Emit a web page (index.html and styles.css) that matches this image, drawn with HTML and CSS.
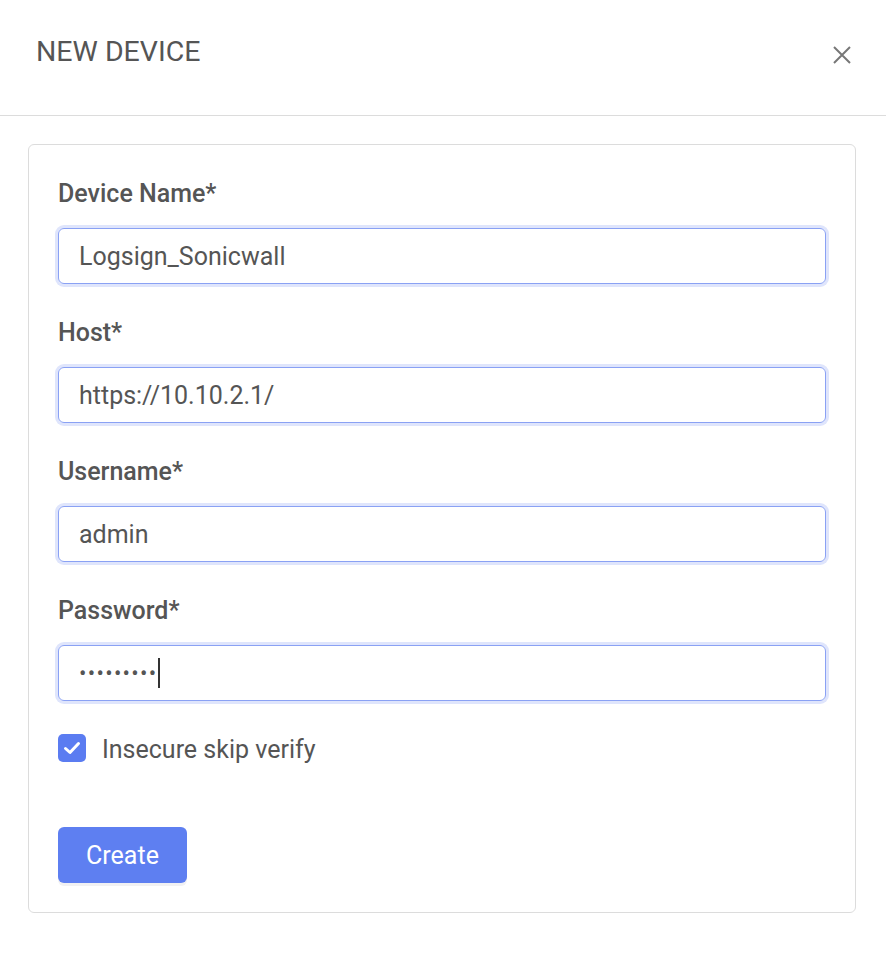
FILE: index.html
```html
<!DOCTYPE html>
<html lang="en">
<head>
<meta charset="utf-8">
<title>New Device</title>
<link rel="stylesheet" href="styles.css">
</head>
<body>
<div class="modal">
  <header class="modal-header">
    <h1 class="modal-title">NEW DEVICE</h1>
    <button class="close-btn" aria-label="Close">
      <svg width="18" height="18" viewBox="0 0 18 18"><path d="M1 1 L17 17 M17 1 L1 17" stroke="#777" stroke-width="2" fill="none"/></svg>
    </button>
  </header>
  <div class="card">
    <div class="field">
      <label class="label">Device Name*</label>
      <div class="input">Logsign_Sonicwall</div>
    </div>
    <div class="field">
      <label class="label">Host*</label>
      <div class="input">https://10.10.2.1/</div>
    </div>
    <div class="field">
      <label class="label">Username*</label>
      <div class="input">admin</div>
    </div>
    <div class="field">
      <label class="label">Password*</label>
      <div class="input"><span class="dots">•••••••••</span><span class="caret"></span></div>
    </div>
    <div class="check-row">
      <span class="checkbox">
        <svg width="28" height="28" viewBox="0 0 28 28"><path d="M7.5 14.5 L12 18.5 L20.5 9.5" stroke="#fff" stroke-width="3" fill="none" stroke-linecap="round" stroke-linejoin="round"/></svg>
      </span>
      <span class="check-label">Insecure skip verify</span>
    </div>
    <button class="create-btn">Create</button>
  </div>
</div>
</body>
</html>
```

FILE: styles.css
```css
* { box-sizing: border-box; }
html, body { margin: 0; padding: 0; background: #fff; }
body { font-family: Roboto, "Liberation Sans", Arial, sans-serif; color: #555; }

.modal { width: 886px; }

.modal-header {
  height: 116px;
  border-bottom: 1px solid #dcdcdc;
  display: flex;
  justify-content: space-between;
  align-items: flex-start;
  padding: 36px 35px 0 36px;
}
.modal-title {
  margin: 0;
  font-size: 28.5px;
  line-height: 32px;
  font-weight: 400;
  color: #555;
}
.close-btn {
  border: none;
  background: none;
  padding: 0;
  margin-top: 10px;
  width: 18px;
  height: 18px;
  display: block;
  cursor: pointer;
}
.close-btn svg { display: block; }

.card {
  margin: 28px 30px 0 28px;
  border: 1px solid #dcdcdc;
  border-radius: 6px;
  padding: 35px 29px 29px 29px;
  display: flex;
  flex-direction: column;
  align-items: flex-start;
}

.field {
  width: 100%;
  display: flex;
  flex-direction: column;
  margin-bottom: 35px;
}
.field:nth-child(4) { margin-bottom: 33px; }
.label {
  font-size: 25px;
  line-height: 28px;
  font-weight: 500;
  color: #555;
  margin-bottom: 20px;
}
.input {
  height: 56px;
  border: 1px solid #8aa1f4;
  border-radius: 6px;
  box-shadow: 0 0 0 3px #dfe5fc;
  padding: 0 20px;
  display: flex;
  align-items: center;
  font-size: 25px;
  color: #555;
}
.dots { letter-spacing: 1.3px; font-size: 22px; }
.caret {
  display: inline-block;
  width: 2px;
  height: 30px;
  background: #333;
  margin-left: 0;
}

.check-row {
  display: flex;
  align-items: center;
  gap: 16px;
  height: 28px;
}
.checkbox {
  width: 28px;
  height: 28px;
  border-radius: 5px;
  background: #5b7cf1;
  display: block;
}
.checkbox svg { display: block; }
.check-label {
  font-size: 25px;
  line-height: 28px;
  color: #555;
  margin-top: 3px;
}

.create-btn {
  margin-top: 65px;
  width: 129px;
  height: 56px;
  border: none;
  border-radius: 6px;
  background: #5e7ff1;
  color: #fff;
  font-family: Roboto, "Liberation Sans", Arial, sans-serif;
  font-size: 25px;
  box-shadow: 0 3px 0 #f1f1f3;
  padding: 0;
  cursor: pointer;
}
```
